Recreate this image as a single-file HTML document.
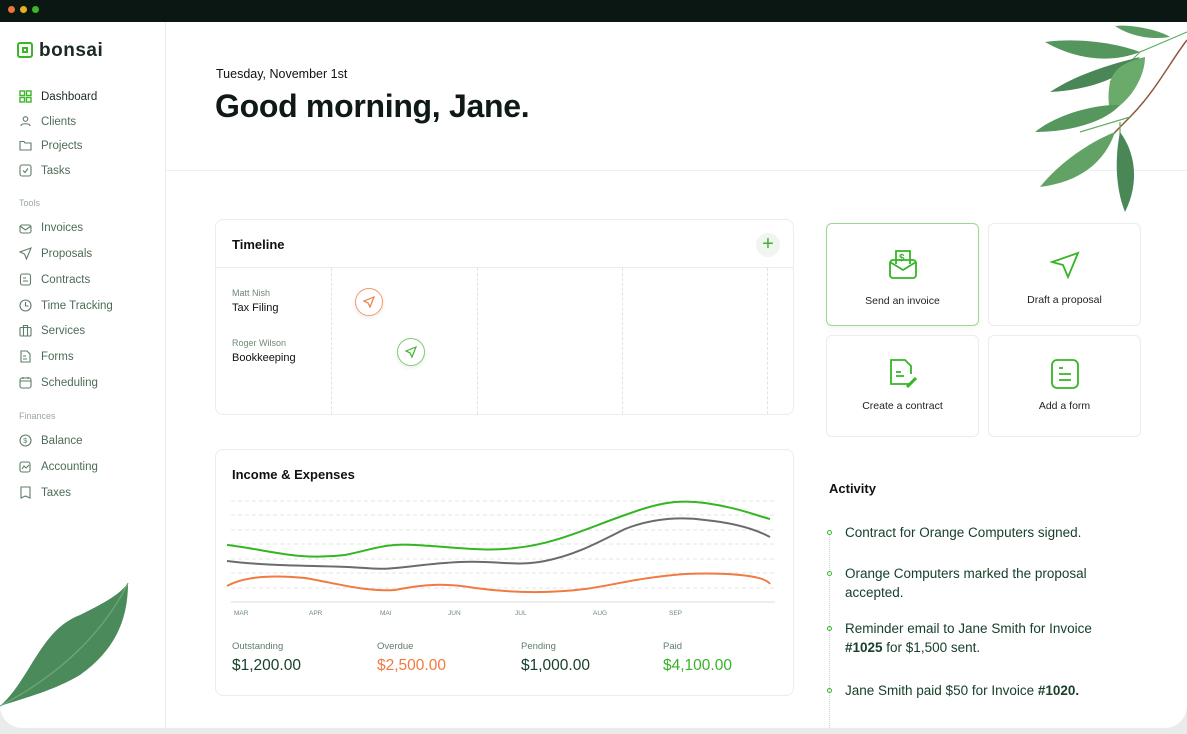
<!DOCTYPE html>
<html><head><meta charset="utf-8"><style>
*{margin:0;padding:0;box-sizing:border-box}
body{width:1187px;height:734px;overflow:hidden;background:#e9ecea;font-family:"Liberation Sans",sans-serif;position:relative;color:#0f1f17}
.win{position:absolute;left:0;top:0;width:1187px;height:728px;background:#fff;border-radius:0 0 22px 22px;overflow:hidden}
.bar{position:absolute;left:0;top:0;width:1187px;height:22px;background:#0b1712}
.dot{position:absolute;top:6px;width:7px;height:7px;border-radius:50%}
.side{position:absolute;left:0;top:22px;width:166px;height:706px;border-right:1px solid #ececec}
.logo{position:absolute;left:17px;top:40px;font-size:19px;font-weight:bold;color:#1b2a22;letter-spacing:.5px}
.nav{position:absolute;left:19px;font-size:11.5px;color:#4d6b57;display:flex;align-items:center}
.nav svg{width:13px;height:13px;margin-right:9px}
.sec{position:absolute;left:19px;font-size:9px;color:#9aa89f}
.card{position:absolute;border:1px solid #ececec;border-radius:8px;background:#fff}
.t{font-weight:bold;font-size:13px;color:#111}
.act{position:absolute;border:1px solid #ececec;border-radius:6px;background:#fff;text-align:center;font-size:10.5px;color:#222}
.act svg{display:block;margin:0 auto}
.ai{position:absolute;left:845px;font-size:13.5px;color:#17402b;line-height:19px}
.ad{position:absolute;left:827px;width:5px;height:5px;border:1.2px solid #3bb52a;border-radius:50%}
.lbl{font-size:9.5px;color:#5e7d68}
.val{font-size:15.5px;margin-top:5px}
</style></head><body>
<div class="win">
<div class="bar"><div class="dot" style="left:8px;background:#f0743a"></div><div class="dot" style="left:20px;background:#e6b21c"></div><div class="dot" style="left:32px;background:#3fb52a"></div></div>
<div class="side">
<div class="logo" style="top:18px"><span style="display:inline-block;width:16px;height:16px;border:2.5px solid #3bb52a;border-radius:3px;vertical-align:-2px;margin-right:6px;position:relative"><span style="position:absolute;left:3px;top:3px;width:6px;height:6px;border:2px solid #3bb52a"></span></span>bonsai</div>
</div>
<div class="nav" style="top:90px;color:#1b2a22"><svg viewBox="0 0 13 13" fill="none" stroke="#3bb52a" stroke-width="1.4"><rect x="1" y="1" width="4.5" height="4.5"/><rect x="7.5" y="1" width="4.5" height="4.5"/><rect x="1" y="7.5" width="4.5" height="4.5"/><rect x="7.5" y="7.5" width="4.5" height="4.5"/></svg>Dashboard</div>
<div class="nav" style="top:115px"><svg viewBox="0 0 13 13" fill="none" stroke="#5e7d68" stroke-width="1.1"><circle cx="6.5" cy="4" r="2.3"/><path d="M2 11c0-3 9-3 9 0"/></svg>Clients</div>
<div class="nav" style="top:139px"><svg viewBox="0 0 13 13" fill="none" stroke="#5e7d68" stroke-width="1.1"><path d="M1 2.5h4l1 1.5h6v7H1z"/></svg>Projects</div>
<div class="nav" style="top:164px"><svg viewBox="0 0 13 13" fill="none" stroke="#5e7d68" stroke-width="1.1"><rect x="1" y="1" width="11" height="11" rx="2"/><path d="M4 6.5l2 2 3-4"/></svg>Tasks</div>
<div class="sec" style="top:198px">Tools</div>
<div class="nav" style="top:221px"><svg viewBox="0 0 13 13" fill="none" stroke="#5e7d68" stroke-width="1.1"><rect x="1" y="4" width="11" height="8" rx="2"/><path d="M1 5l5.5 4 5.5-4"/></svg>Invoices</div>
<div class="nav" style="top:247px"><svg viewBox="0 0 13 13" fill="none" stroke="#5e7d68" stroke-width="1.1"><path d="M12 1L1 5l4.5 2 2 5z"/></svg>Proposals</div>
<div class="nav" style="top:273px"><svg viewBox="0 0 13 13" fill="none" stroke="#5e7d68" stroke-width="1.1"><rect x="1.5" y="1" width="10" height="11" rx="2"/><path d="M4 5h3M4 8h5"/></svg>Contracts</div>
<div class="nav" style="top:299px"><svg viewBox="0 0 13 13" fill="none" stroke="#5e7d68" stroke-width="1.1"><circle cx="6.5" cy="6.5" r="5.5"/><path d="M6.5 3v4h3"/></svg>Time Tracking</div>
<div class="nav" style="top:324px"><svg viewBox="0 0 13 13" fill="none" stroke="#5e7d68" stroke-width="1.1"><rect x="1" y="3.5" width="11" height="8.5" rx="1"/><path d="M4.5 3.5V1.5h4v2M4.5 3.5v8.5M8.5 3.5v8.5"/></svg>Services</div>
<div class="nav" style="top:350px"><svg viewBox="0 0 13 13" fill="none" stroke="#5e7d68" stroke-width="1.1"><path d="M2 1h6l3 3v8H2z"/><path d="M4 6h3M4 9h4"/></svg>Forms</div>
<div class="nav" style="top:376px"><svg viewBox="0 0 13 13" fill="none" stroke="#5e7d68" stroke-width="1.1"><rect x="1" y="2" width="11" height="10" rx="2"/><path d="M1 5h11M4 1v2M9 1v2"/></svg>Scheduling</div>
<div class="sec" style="top:411px">Finances</div>
<div class="nav" style="top:434px"><svg viewBox="0 0 13 13" fill="none" stroke="#5e7d68" stroke-width="1.1"><circle cx="6.5" cy="6.5" r="5.5"/><text x="4.3" y="9" font-size="7" fill="#5e7d68" stroke="none">$</text></svg>Balance</div>
<div class="nav" style="top:460px"><svg viewBox="0 0 13 13" fill="none" stroke="#5e7d68" stroke-width="1.1"><rect x="1" y="2" width="10" height="10" rx="2"/><path d="M3 9l2-3 2 2 3-3"/></svg>Accounting</div>
<div class="nav" style="top:486px"><svg viewBox="0 0 13 13" fill="none" stroke="#5e7d68" stroke-width="1.1"><path d="M2 1h9v11l-4.5-2L2 12z"/></svg>Taxes</div>
<svg style="position:absolute;left:0;top:580px" width="135" height="130"><path d="M0 126 C30 100 40 50 80 35 C100 25 120 15 128 3 C128 40 115 70 80 95 C55 110 25 118 0 126Z" fill="#4b8a5a"/><path d="M0 126 C50 100 100 60 128 3" stroke="#6fa877" stroke-width="1.2" fill="none"/></svg>

<div style="position:absolute;left:166px;top:170px;width:1021px;height:1px;background:#efefef"></div>
<div style="position:absolute;left:216px;top:67px;font-size:12.5px;color:#111">Tuesday, November 1st</div>
<div style="position:absolute;left:215px;top:88px;font-size:32px;font-weight:bold;color:#0f1a14;letter-spacing:-.3px">Good morning, Jane.</div>

<svg style="position:absolute;left:1020px;top:22px" width="167" height="195">
<path d="M167 18 C150 40 135 70 110 95 C95 110 85 120 75 135" stroke="#8a5a3c" stroke-width="1.5" fill="none"/>
<path d="M167 10 L120 30 L90 60 M110 95 L60 110 M100 100 L100 150" stroke="#5fae62" stroke-width="1.2" fill="none"/>
<path d="M95 4 C110 2 140 8 150 15 C130 18 110 14 95 4Z" fill="#5c9d63"/>
<path d="M25 20 C60 15 100 22 120 30 C95 40 60 40 25 20Z" fill="#55955e"/>
<path d="M30 70 C60 50 100 40 120 35 C105 55 70 68 30 70Z" fill="#4a8757"/>
<path d="M90 60 C95 45 105 40 125 35 C125 55 110 80 90 90 C88 80 88 70 90 60Z" fill="#6aab6b"/>
<path d="M15 110 C40 90 80 82 100 83 C85 100 50 110 15 110Z" fill="#56975d"/>
<path d="M20 165 C40 140 70 120 95 110 C85 140 60 160 20 165Z" fill="#62a365"/>
<path d="M100 110 C115 130 120 160 105 190 C95 165 95 135 100 110Z" fill="#4a8757"/>
</svg>

<div class="card" style="left:215px;top:219px;width:579px;height:196px">
<div class="t" style="position:absolute;left:16px;top:17px">Timeline</div>
<div style="position:absolute;right:13px;top:13px;width:24px;height:24px;border-radius:50%;background:#f1f4f1;color:#3bb52a;font-size:20px;text-align:center;line-height:23px">+</div>
<div style="position:absolute;left:0;top:47px;width:577px;height:1px;background:#ececec"></div>
<div style="position:absolute;left:115px;top:48px;height:146px;border-left:1px dashed #e2e2e2"></div>
<div style="position:absolute;left:261px;top:48px;height:146px;border-left:1px dashed #e2e2e2"></div>
<div style="position:absolute;left:406px;top:48px;height:146px;border-left:1px dashed #e2e2e2"></div>
<div style="position:absolute;left:551px;top:48px;height:146px;border-left:1px dashed #e2e2e2"></div>
<div style="position:absolute;left:16px;top:68px;font-size:9px;color:#6d8a75">Matt Nish</div>
<div style="position:absolute;left:16px;top:82px;font-size:11px;color:#111">Tax Filing</div>
<div style="position:absolute;left:16px;top:118px;font-size:9px;color:#6d8a75">Roger Wilson</div>
<div style="position:absolute;left:16px;top:132px;font-size:11px;color:#111">Bookkeeping</div>
<div style="position:absolute;left:139px;top:68px;width:28px;height:28px;border-radius:50%;border:1px solid #f39a70;background:#fff;box-shadow:0 2px 5px rgba(0,0,0,.08)"><svg width="26" height="26" viewBox="0 0 26 26"><path d="M18 8L8 12l4 2 2 4z" fill="none" stroke="#f07a40" stroke-width="1.2"/></svg></div>
<div style="position:absolute;left:181px;top:118px;width:28px;height:28px;border-radius:50%;border:1px solid #7fcc74;background:#fff;box-shadow:0 2px 5px rgba(0,0,0,.08)"><svg width="26" height="26" viewBox="0 0 26 26"><path d="M18 8L8 12l4 2 2 4z" fill="none" stroke="#3bb52a" stroke-width="1.2"/></svg></div>
</div>

<div class="card" style="left:215px;top:449px;width:579px;height:247px">
<div class="t" style="position:absolute;left:16px;top:17px">Income &amp; Expenses</div>
<svg style="position:absolute;left:-1px;top:-1px" width="579" height="247">
<g stroke="#e4e4e4" stroke-dasharray="4 3"><path d="M16 52H560M16 66H560M16 81H560M16 95H560M16 110H560M16 124H560M16 139H560"/></g>
<path d="M16 153H560" stroke="#ddd"/>
<path d="M12 96 C50 100 80 112 130 106 C160 100 170 94 200 96 C240 98 270 103 300 99 C340 95 370 80 410 66 C440 55 460 50 490 54 C520 58 540 66 555 70" stroke="#35b524" stroke-width="2" fill="none"/>
<path d="M12 112 C60 118 110 116 150 119 C180 122 200 115 245 113 C280 111 300 118 330 112 C360 106 380 95 410 80 C440 68 470 68 490 71 C520 74 540 80 555 88" stroke="#6b6b6b" stroke-width="2" fill="none"/>
<path d="M12 137 C30 127 60 126 90 129 C120 134 150 143 180 141 C210 135 230 134 260 139 C290 143 330 145 370 140 C400 136 420 129 470 125 C495 124 548 124 555 135" stroke="#f07a40" stroke-width="2" fill="none"/>
<g font-size="6.5" fill="#6d8a75" font-family="Liberation Sans"><text x="19" y="166">MAR</text><text x="94" y="166">APR</text><text x="165" y="166">MAI</text><text x="233" y="166">JUN</text><text x="300" y="166">JUL</text><text x="378" y="166">AUG</text><text x="454" y="166">SEP</text></g>
</svg>
<div style="position:absolute;left:16px;top:191px"><div class="lbl">Outstanding</div><div class="val" style="color:#17402b">$1,200.00</div></div>
<div style="position:absolute;left:161px;top:191px"><div class="lbl">Overdue</div><div class="val" style="color:#f07a40">$2,500.00</div></div>
<div style="position:absolute;left:305px;top:191px"><div class="lbl">Pending</div><div class="val" style="color:#17402b">$1,000.00</div></div>
<div style="position:absolute;left:447px;top:191px"><div class="lbl">Paid</div><div class="val" style="color:#35b524">$4,100.00</div></div>
</div>

<div class="act" style="left:826px;top:223px;width:153px;height:103px;border-color:#9bd88f;box-shadow:0 2px 8px rgba(0,0,0,.05)"><svg style="margin-top:24px" width="30" height="32" viewBox="0 0 30 32" fill="none" stroke="#35b524" stroke-width="1.8"><rect x="2" y="12" width="26" height="18" rx="3"/><path d="M8 16V3h14v13M2 14l13 8 13-8"/><text x="11" y="13" font-size="10" fill="#35b524" stroke="none" font-weight="bold">$</text></svg><div style="margin-top:15px">Send an invoice</div></div>
<div class="act" style="left:988px;top:223px;width:153px;height:103px"><svg style="margin-top:27px" width="30" height="30" viewBox="0 0 30 30" fill="none" stroke="#35b524" stroke-width="1.8"><path d="M28 2L2 11l11 3 5 12z"/></svg><div style="margin-top:13px">Draft a proposal</div></div>
<div class="act" style="left:826px;top:335px;width:153px;height:102px"><svg style="margin-top:22px" width="32" height="32" viewBox="0 0 32 32" fill="none" stroke="#35b524" stroke-width="1.8"><path d="M22 26H4V2h14l6 6v8"/><path d="M9 14h5M9 18h8"/><path d="M20 29l9-9" stroke-width="3"/></svg><div style="margin-top:10px">Create a contract</div></div>
<div class="act" style="left:988px;top:335px;width:153px;height:102px"><svg style="margin-top:22px" width="30" height="32" viewBox="0 0 30 32" fill="none" stroke="#35b524" stroke-width="1.8"><rect x="2" y="2" width="26" height="28" rx="5"/><path d="M9 10h4M9 16h12M9 22h12"/></svg><div style="margin-top:10px">Add a form</div></div>

<div class="t" style="position:absolute;left:829px;top:481px">Activity</div>
<div style="position:absolute;left:829px;top:535px;height:195px;border-left:1px dotted #cfd8d2"></div>
<div class="ad" style="top:530px"></div><div class="ai" style="top:523px">Contract for Orange Computers signed.</div>
<div class="ad" style="top:571px"></div><div class="ai" style="top:564px">Orange Computers marked the proposal<br>accepted.</div>
<div class="ad" style="top:626px"></div><div class="ai" style="top:619px">Reminder email to Jane Smith for Invoice<br><b>#1025</b> for $1,500 sent.</div>
<div class="ad" style="top:688px"></div><div class="ai" style="top:681px">Jane Smith paid $50 for Invoice <b>#1020.</b></div>
</div>
</body></html>
